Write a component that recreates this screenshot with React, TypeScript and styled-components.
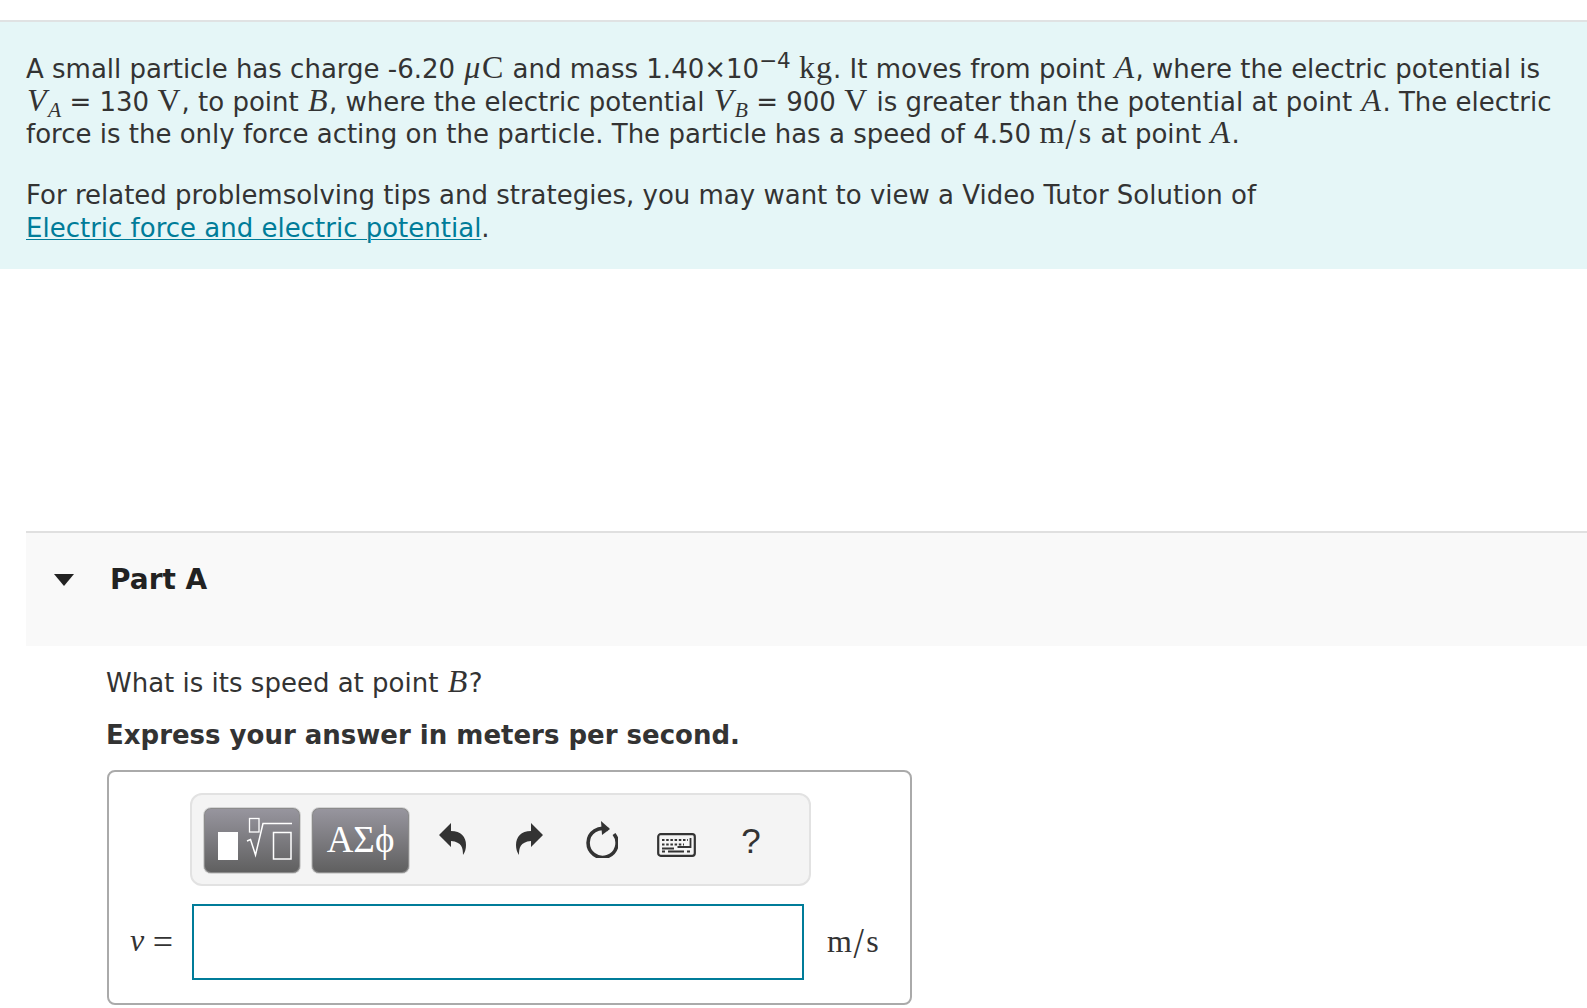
import React from "react";
import styled, { createGlobalStyle } from "styled-components";

const Global = createGlobalStyle`
  html, body { margin: 0; padding: 0; background: #fff; }
  body { font-family: "DejaVu Sans", sans-serif; color: #333; overflow: hidden; }
`;
const Page = styled.div`
  width: 1587px; height: 1008px; overflow: hidden; padding-top: 20px; box-sizing: border-box;
`;
const Intro = styled.section`
  height: 249px; box-sizing: border-box; background: #e5f6f7; border-top: 2px solid #e0e2e3;
  padding: 31px 26px 0; font-size: 26px; line-height: 32.7px; letter-spacing: 0;
`;
const Para = styled.p`
  margin: 0 0 28px; white-space: nowrap;
`;
const Line = styled.div`
  height: 32.7px; white-space: nowrap;
`;
const M = styled.span<{ $it?: boolean }>`
  font-family: "Liberation Serif", "Times New Roman", serif;
  font-style: ${p => (p.$it ? "italic" : "normal")};
  font-size: 32px;
  letter-spacing: ${p => (p.$it ? "1.5px" : "1px")};
  margin-left: ${p => (p.$it ? "1px" : "0")};
  line-height: 0;
`;
const Slash = styled.span`
  display: inline-block; font-family: "Liberation Serif", serif; font-size: 34px; line-height: 0; font-weight: 400;
  margin: 0 2px 0 1px; transform: translateY(3px) scale(1.1, 1.3);
`;
const Sub = styled.sub`
  font-family: "Liberation Serif", serif; font-style: italic; font-size: 21.500px;
  line-height: 0; vertical-align: -6px;
`;
const Sup = styled.sup`
  font-size: 21.500px; line-height: 0; vertical-align: 10px;
`;
const TutorLink = styled.a`
  color: #007c99; text-decoration: underline; text-underline-offset: 2px; text-decoration-thickness: 1px;
`;
const PartSection = styled.section`
  margin: 262px 0 0 26px;
`;
const PartHeader = styled.header`
  height: 115px; box-sizing: border-box; background: #f9f9f9; border-top: 2px solid #e0e0e0;
  display: flex; align-items: flex-start; padding: 30px 0 0 28px;
`;
const Caret = styled.span`
  width: 0; height: 0; margin-top: 11px; border-left: 10.5px solid transparent; border-right: 10.5px solid transparent;
  border-top: 12px solid #222;
`;
const PartTitle = styled.h2`
  margin: 1px 0 0 36px; font-size: 28px; line-height: 32px; font-weight: 700; color: #222;
`;
const PartBody = styled.div`
  padding: 21px 0 0 80px;
`;
const Question = styled.p`
  margin: 0; font-size: 26px; line-height: 33px; white-space: nowrap;
`;
const Instruction = styled.p`
  margin: 19px 0 0; font-size: 26px; line-height: 33px; font-weight: 700; white-space: nowrap;
`;
const AnswerBox = styled.div`
  margin: 18px 0 0 1px; width: 805px; height: 235px; box-sizing: border-box;
  border: 2px solid #aaa; border-radius: 8px; padding: 21px 0 0 81px;
`;
const Toolbar = styled.div`
  width: 621px; height: 93px; box-sizing: border-box; background: #f4f4f4; border: 2px solid #e2e2e2;
  border-radius: 12px; display: flex; align-items: flex-start; padding: 12px 0 0 11px;
`;
const TemplateButton = styled.button<{ $w: number; $gap: number }>`
  width: ${p => p.$w}px; height: 67px; margin-right: ${p => p.$gap}px; padding: 0 0 3px; box-sizing: border-box;
  background: linear-gradient(#98969f, #5f5f5f); border: 1px solid #d4d4d4; border-radius: 8px;
  color: #fff; font-family: "Liberation Serif", serif; font-size: 37px; display: flex;
  align-items: center; justify-content: center; box-shadow: inset 0 0 0 1px #8b8b8b;
`;
const IconSlot = styled.span<{ $w: number; $drop?: number }>`
  width: ${p => p.$w}px; height: 64px; display: flex; align-items: center; justify-content: center; color: #333;
  padding-top: ${p => p.$drop ?? 0}px;
`;
const Help = styled.span`
  font-family: "Liberation Sans", sans-serif; font-size: 35px; color: #333; line-height: 1;
`;
const InputRow = styled.div`
  display: flex; align-items: center; margin: 18px 0 0 -81px;
`;
const Label = styled.span`
  width: 83px; box-sizing: border-box; padding-left: 20px; font-family: "Liberation Serif", serif; font-size: 28px; white-space: nowrap;
`;
const Equals = styled.span`
  font-size: 36px; line-height: 0; vertical-align: -3px;
`;
const Answer = styled.input`
  width: 612px; height: 76px; box-sizing: border-box; border: 2px solid #007c99; background: #fff; outline: none;
  border-radius: 0; padding: 0;
`;
const Unit = styled.span`
  margin-left: 23px; font-family: "Liberation Serif", serif; font-size: 29px; color: #333;
`;

const RootIcon = () => (
  <svg width="96" height="65" viewBox="0 0 96 65" fill="none" style={{ marginTop: 3 }}>
    <rect x="14" y="24" width="20" height="28" fill="#fff" />
    <rect x="45.500" y="10.500" width="9.500" height="13.500" stroke="#fff" strokeWidth="1.300" />
    <path d="M43 33l3.500-1.500 5 15.500 7.500-31.500h29" stroke="#fff" strokeWidth="1.500" />
    <rect x="69.500" y="24.500" width="17.500" height="26.500" stroke="#fff" strokeWidth="1.500" />
  </svg>
);
const Undo = ({ flip }: { flip?: boolean }) => (
  <svg width="28" height="32" viewBox="0 0 28 32" style={flip ? { transform: "scaleX(-1)" } : undefined}>
    <path d="M0 12L12 0v8c10 0 15 6 15 14 0 4-1 7-3 10 0-7-1-13-12-14v6z" fill="#333" />
  </svg>
);
const Reset = () => (
  <svg width="34" height="38" viewBox="0 0 34 38" fill="none">
    <path d="M24 9.500A14.500 14.500 0 1 0 30 14" stroke="#333" strokeWidth="3.600" />
    <path d="M17 1l9 8-8 6z" fill="#333" />
  </svg>
);
const Keyboard = () => (
  <svg width="39" height="24" viewBox="0 0 39 24" fill="none">
    <rect x="1.200" y="1.200" width="36.600" height="21.600" rx="2.500" stroke="#333" strokeWidth="2.200" />
    <path d="M5 7h26M5 11.500h22" stroke="#333" strokeWidth="2" strokeDasharray="2.500 1.700" />
    <path d="M33.500 5v9h-13M5 15.500h12M5 18.500h3M11 18.500h16M30 18.500h3" stroke="#333" strokeWidth="1.800" />
  </svg>
);

export default function App() {
  return (
    <Page>
      <Global />
      <Intro>
        <Para>
          <Line>A small particle has charge -6.20 <M $it>μ</M><M>C</M> and mass 1.40×10<Sup>−4</Sup> <M>kg</M>. It moves from point <M $it>A</M>, where the electric potential is</Line>
          <Line><M $it>V</M><Sub>A</Sub> = 130 <M>V</M>, to point <M $it>B</M>, where the electric potential <M $it>V</M><Sub>B</Sub> = 900 <M>V</M> is greater than the potential at point <M $it>A</M>. The electric</Line>
          <Line>force is the only force acting on the particle. The particle has a speed of 4.50 <M>m<Slash>/</Slash>s</M> at point <M $it>A</M>.</Line>
        </Para>
        <Line>For related problemsolving tips and strategies, you may want to view a Video Tutor Solution of</Line>
        <Line><TutorLink href="#">Electric force and electric potential</TutorLink>.</Line>
      </Intro>
      <PartSection>
        <PartHeader>
          <Caret />
          <PartTitle>Part A</PartTitle>
        </PartHeader>
        <PartBody>
          <Question>What is its speed at point <M $it>B</M>?</Question>
          <Instruction>Express your answer in meters per second.</Instruction>
          <AnswerBox>
            <Toolbar>
              <TemplateButton $w={98} $gap={10}><RootIcon /></TemplateButton>
              <TemplateButton $w={99} $gap={8}>ΑΣϕ</TemplateButton>
              <IconSlot $w={69}><Undo /></IconSlot>
              <IconSlot $w={84}><Undo flip /></IconSlot>
              <IconSlot $w={60}><Reset /></IconSlot>
              <IconSlot $w={90} $drop={6}><Keyboard /></IconSlot>
              <IconSlot $w={60} $drop={1}><Help>?</Help></IconSlot>
            </Toolbar>
            <InputRow>
              <Label><M $it>v</M> <Equals>=</Equals></Label>
              <Answer aria-label="v" />
              <Unit><M>m<Slash>/</Slash>s</M></Unit>
            </InputRow>
          </AnswerBox>
        </PartBody>
      </PartSection>
    </Page>
  );
}
